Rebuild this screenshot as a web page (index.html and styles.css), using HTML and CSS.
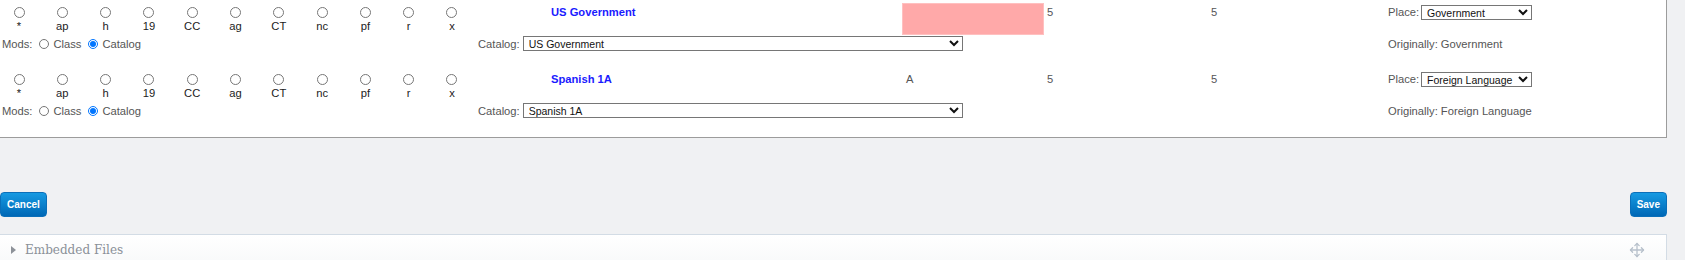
FILE: index.html
```html
<!DOCTYPE html>
<html>
<head>
<meta charset="utf-8">
<link rel="stylesheet" href="styles.css">
</head>
<body>
<div class="page">
  <div class="panel">
    <div class="course">
      <div class="radios">
        <label class="opt"><input type="radio" name="g1"><span>*</span></label>
        <label class="opt"><input type="radio" name="g1"><span>ap</span></label>
        <label class="opt"><input type="radio" name="g1"><span>h</span></label>
        <label class="opt"><input type="radio" name="g1"><span>19</span></label>
        <label class="opt"><input type="radio" name="g1"><span>CC</span></label>
        <label class="opt"><input type="radio" name="g1"><span>ag</span></label>
        <label class="opt"><input type="radio" name="g1"><span>CT</span></label>
        <label class="opt"><input type="radio" name="g1"><span>nc</span></label>
        <label class="opt"><input type="radio" name="g1"><span>pf</span></label>
        <label class="opt"><input type="radio" name="g1"><span>r</span></label>
        <label class="opt"><input type="radio" name="g1"><span>x</span></label>
      </div>
      <div class="cell title">US Government</div>
      <div class="grade missing"></div>
      <div class="cell num">5</div>
      <div class="cell num">5</div>
      <div class="cell place">Place: <select class="sel place-sel"><option>Government</option></select></div>
      <div class="cell2 mods">Mods: <input type="radio" name="m1"><span class="rl">Class</span><input type="radio" name="m1" checked><span class="rl">Catalog</span></div>
      <div class="cell2 catalog">Catalog: <select class="sel cat-sel"><option>US Government</option></select></div>
      <div class="cell2 orig">Originally: Government</div>
    </div>

    <div class="course">
      <div class="radios">
        <label class="opt"><input type="radio" name="g2"><span>*</span></label>
        <label class="opt"><input type="radio" name="g2"><span>ap</span></label>
        <label class="opt"><input type="radio" name="g2"><span>h</span></label>
        <label class="opt"><input type="radio" name="g2"><span>19</span></label>
        <label class="opt"><input type="radio" name="g2"><span>CC</span></label>
        <label class="opt"><input type="radio" name="g2"><span>ag</span></label>
        <label class="opt"><input type="radio" name="g2"><span>CT</span></label>
        <label class="opt"><input type="radio" name="g2"><span>nc</span></label>
        <label class="opt"><input type="radio" name="g2"><span>pf</span></label>
        <label class="opt"><input type="radio" name="g2"><span>r</span></label>
        <label class="opt"><input type="radio" name="g2"><span>x</span></label>
      </div>
      <div class="cell title">Spanish 1A</div>
      <div class="grade"><span class="cell num">A</span></div>
      <div class="cell num">5</div>
      <div class="cell num">5</div>
      <div class="cell place">Place: <select class="sel place-sel"><option>Foreign Language</option></select></div>
      <div class="cell2 mods">Mods: <input type="radio" name="m2"><span class="rl">Class</span><input type="radio" name="m2" checked><span class="rl">Catalog</span></div>
      <div class="cell2 catalog">Catalog: <select class="sel cat-sel"><option>Spanish 1A</option></select></div>
      <div class="cell2 orig">Originally: Foreign Language</div>
    </div>
  </div>

  <div class="actions">
    <button class="btn">Cancel</button>
    <button class="btn">Save</button>
  </div>

  <div class="embedded">
    <span class="tri"></span>
    <span class="emb-title">Embedded Files</span>
    <svg class="move" width="16" height="16" viewBox="0 0 16 16" fill="none" stroke="#b7c0cb" stroke-width="1.3" stroke-linecap="round" stroke-linejoin="round">
      <path d="M8 1.5v13M1.5 8h13"/>
      <path d="M5.8 3.6L8 1.5l2.2 2.1M5.8 12.4L8 14.5l2.2-2.1M3.6 5.8L1.5 8l2.1 2.2M12.4 5.8L14.5 8l-2.1 2.2"/>
    </svg>
  </div>
</div>
</body>
</html>
```

FILE: styles.css
```css
html, body {
  margin: 0;
  padding: 0;
  background: #f0f1f3;
  font-family: "Liberation Sans", Arial, sans-serif;
  font-size: 11.2px;
  color: #555;
  overflow: hidden;
}

.page {
  width: 1667px;
}

.panel {
  width: 1666px;
  background: #fff;
  border-right: 1px solid #9c9c9c;
  border-bottom: 1px solid #9c9c9c;
  padding-top: 3px;
}

.course {
  display: grid;
  grid-template-columns: 474px 428px 142px 164px 176px 1fr;
  grid-template-rows: 32px 17px;
  margin-bottom: 18px;
}

.radios {
  display: flex;
  margin-left: -2.65px;
}

.opt {
  width: 43.3px;
  display: flex;
  flex-direction: column;
  align-items: center;
  color: #222;
}

.opt input {
  width: 11px;
  height: 11px;
  margin: 3.5px 0 0 0;
}

.opt span {
  line-height: 13px;
  margin-top: 2px;
}

.cell {
  display: flex;
  align-items: center;
  height: 18px;
  padding-left: 3px;
  white-space: nowrap;
}

.title {
  padding-left: 77px;
  font-weight: bold;
  color: #1a1aff;
}

.grade.missing {
  background: #ffa9a9;
  border: 1px solid #ffc0c0;
}

.grade .num {
  padding-left: 4px;
}

.num {
  color: #555;
}

.place {
  padding-left: 4px;
}

.place select {
  margin-left: 2px;
}

.sel {
  font-family: "Liberation Sans", Arial, sans-serif;
  font-size: 10.5px;
  color: #111;
  height: 15px;
  padding: 0 0 0 1px;
  border: 1px solid #767676;
  border-radius: 0;
  background: #fff;
}

.place-sel {
  width: 111px;
}

.cat-sel {
  width: 440px;
  margin-left: 0;
}

.cell2 {
  display: flex;
  align-items: center;
  white-space: nowrap;
}

.mods {
  padding-left: 2px;
}

.mods input {
  width: 10px;
  height: 10px;
  margin: 0 4px 0 7px;
}

.catalog {
  grid-column: 2 / 6;
  padding-left: 4px;
}

.catalog select {
  margin-left: 3px;
}

.orig {
  padding-left: 4px;
}

.actions {
  display: flex;
  justify-content: space-between;
  margin-top: 54px;
}

.btn {
  height: 25px;
  padding: 0 6px;
  border: 1px solid #0b6fb9;
  border-radius: 4px;
  background: linear-gradient(#169ae2, #0068b6);
  color: #fff;
  font-family: "Liberation Sans", Arial, sans-serif;
  font-weight: bold;
  font-size: 10px;
}

.embedded {
  margin-top: 17px;
  height: 30px;
  background: linear-gradient(#ffffff, #f8f9fa);
  border-top: 1px solid #d3dce5;
  border-right: 1px solid #d3dce5;
  display: flex;
  align-items: center;
  padding-left: 11px;
  box-sizing: border-box;
  width: 1667px;
}

.tri {
  width: 0;
  height: 0;
  border-left: 5px solid #8d9299;
  border-top: 4px solid transparent;
  border-bottom: 4px solid transparent;
  margin-right: 9px;
}

.emb-title {
  font-family: "DejaVu Serif", serif;
  font-size: 12px;
  color: #8a9098;
  flex: 1;
}

.move {
  margin-right: 21px;
}
```
